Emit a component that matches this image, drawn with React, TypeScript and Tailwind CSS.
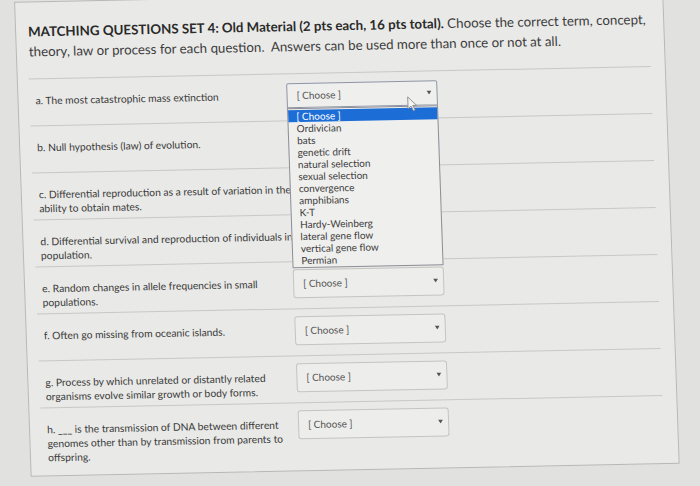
import React from 'react';

const OPTIONS = [
  '[ Choose ]',
  'Ordivician',
  'bats',
  'genetic drift',
  'natural selection',
  'sexual selection',
  'convergence',
  'amphibians',
  'K-T',
  'Hardy-Weinberg',
  'lateral gene flow',
  'vertical gene flow',
  'Permian',
];

const QUESTIONS: { lines: string[]; open?: boolean }[] = [
  { lines: ['a. The most catastrophic mass extinction'], open: true },
  { lines: ['b. Null hypothesis (law) of evolution.'] },
  { lines: ['c. Differential reproduction as a result of variation in the', 'ability to obtain mates.'] },
  { lines: ['d. Differential survival and reproduction of individuals in a', 'population.'] },
  { lines: ['e. Random changes in allele frequencies in small', 'populations.'] },
  { lines: ['f. Often go missing from oceanic islands.'] },
  { lines: ['g. Process by which unrelated or distantly related', 'organisms evolve similar growth or body forms.'] },
  {
    lines: [
      'h. ___ is the transmission of DNA between different',
      'genomes other than by transmission from parents to',
      'offspring.',
    ],
  },
];

export default function App() {
  return (
    <div
      className="w-[700px] h-[486px] overflow-hidden bg-[#e1e1df]"
      style={{ fontFamily: 'Lato, "Liberation Sans", sans-serif' }}
    >
      {/* the photo is slightly rotated / sheared */}
      <div className="origin-top-left [transform:matrix(1,-0.02,0.035,1,0,0)] pt-[2px] pl-[14px]">
        <div className="relative w-[649px] h-[475px] border border-[#b8b8b6] bg-[#e9e9e7]">
          <div className="pl-[12px] pt-[19px] w-[645px] text-[13.3px] leading-[20px] text-[#3c3c3c]">
            <span className="font-bold text-[#2a2a2a]">
              MATCHING QUESTIONS SET 4: Old Material (2 pts each, 16 pts total).
            </span>{' '}
            Choose the correct term, concept,
            <br />
            theory, law or process for each question.&nbsp; Answers can be used more than once or not at all.
          </div>

          <div className="ml-[11px] mr-[14px] mt-[17px]">
            {QUESTIONS.map((q, i) => (
              <QuestionRow key={i} lines={q.lines} open={q.open} last={i === QUESTIONS.length - 1} />
            ))}
          </div>

          <Cursor />
        </div>
      </div>
    </div>
  );
}

function QuestionRow({ lines, open, last }: { lines: string[]; open?: boolean; last?: boolean }) {
  return (
    <div className={`flex items-start border-t border-[#c8c8c6] pl-[6px] ${last ? 'h-[68px]' : 'h-[47px]'}`}>
      <div className="w-[251px] pt-[14px] text-[10.3px] leading-[14px] text-[#3a3a3a] whitespace-nowrap">
        {lines.map((l) => (
          <div key={l}>{l}</div>
        ))}
      </div>
      {open ? <OpenSelect /> : <Select />}
    </div>
  );
}

function Arrow() {
  return (
    <svg width="5" height="4" viewBox="0 0 5 4" className="mt-[-2px]">
      <path d="M0 0 L5 0 L2.5 4 Z" fill="#555" />
    </svg>
  );
}

function Select() {
  return (
    <div className="mt-[7px] h-[29px] w-[151px] rounded-[3px] border border-[#c4c4c2] bg-[#ededeb] flex items-center justify-between pl-[9px] pr-[5px] text-[10px] text-[#555]">
      <span>[ Choose ]</span>
      <Arrow />
    </div>
  );
}

function OpenSelect() {
  return (
    <div className="relative mt-[9px] w-[151px]">
      <div className="h-[25px] rounded-t-[2px] border border-[#8e95a6] bg-[#efefed] flex items-center justify-between pl-[9px] pr-[5px] text-[10px] text-[#555]">
        <span>[ Choose ]</span>
        <Arrow />
      </div>
      <div className="absolute left-0 top-full z-10 w-full border border-[#8c8d96] bg-[#efefed] py-[1px] text-[10px] leading-[12px] text-[#3c3c3c]">
        {OPTIONS.map((o, i) => (
          <div key={o} className={i === 0 ? 'bg-[#1c6dd6] pl-[8px] text-white' : 'pl-[8px]'}>
            {o}
          </div>
        ))}
      </div>
    </div>
  );
}

function Cursor() {
  return (
    <svg width="11" height="16" viewBox="0 0 11 16" className="absolute left-[388px] top-[101px] z-20">
      <path
        d="M1 1 L1 13 L4 10.2 L6.3 15 L8 14.2 L5.8 9.6 L9.6 9.6 Z"
        fill="#f4f4f4"
        stroke="#8a8a8a"
        strokeWidth="0.9"
        strokeLinejoin="round"
      />
    </svg>
  );
}
